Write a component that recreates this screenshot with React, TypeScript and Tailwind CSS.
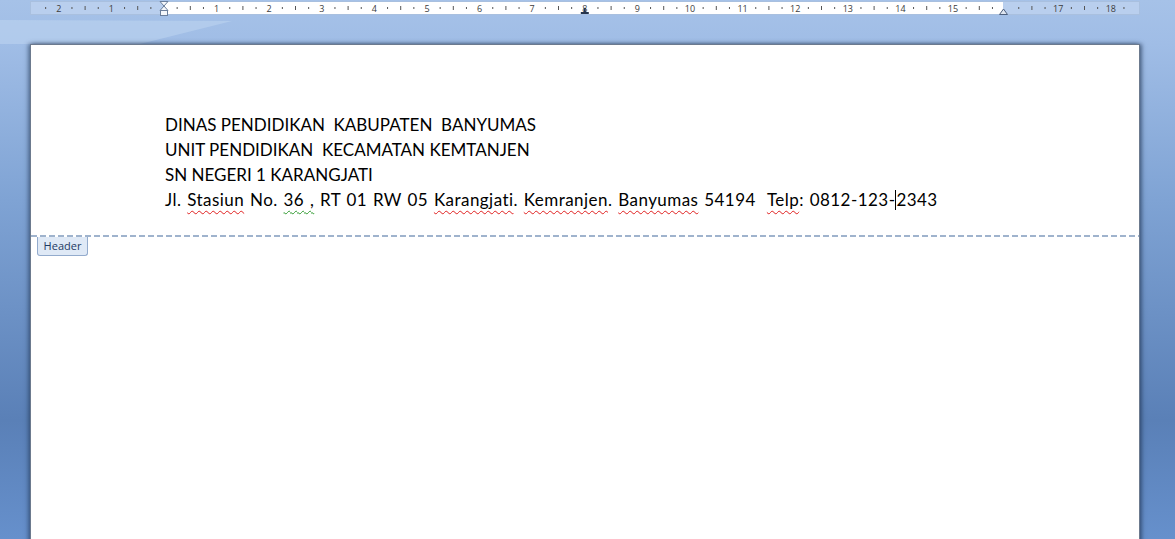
import React from "react";

// ruler geometry: 1 cm = 52.6px, zero point at 134px from the ruler's left edge
const CM = 52.6;
const ZERO = 134;

function Ruler() {
  const ticks: React.ReactNode[] = [];
  for (let q = -10; q <= 76; q++) {
    const x = ZERO + (q * CM) / 4;
    if (x < 3 || x > 1107) continue;
    const n = q / 4;
    if (q % 4 === 0) {
      // 0 and 16 sit under the indent markers
      if (n === 0 || n === 16) continue;
      ticks.push(
        <text key={q} x={x} y={10.5} textAnchor="middle" fontSize="9" fill="#3c3c3c" fontFamily="'Open Sans', sans-serif">
          {Math.abs(n)}
        </text>
      );
    } else if (q % 2 === 0) {
      ticks.push(<rect key={q} x={x - 0.5} y={5} width={1} height={4} fill="#555" />);
    } else {
      ticks.push(<rect key={q} x={x - 0.5} y={6} width={1} height={2} fill="#555" />);
    }
  }
  return (
    <svg width="1110" height="16" viewBox="0 0 1110 16" className="block">
      <rect x="0.5" y="0.5" width="1109" height="13" fill="#b9cfee" stroke="#a9c0df" />
      <rect x={ZERO} y="1" width={973 - ZERO} height="12" fill="#ffffff" />
      {ticks}
      {/* first line / hanging indent */}
      <path d="M130 0.5 L138 0.5 L134 5 Z" fill="#f4f7fb" stroke="#6b7f9c" />
      <path d="M134 5 L130 9.5 L138 9.5 Z" fill="#f4f7fb" stroke="#6b7f9c" />
      <rect x="130.5" y="9.5" width="7" height="5" fill="#f4f7fb" stroke="#6b7f9c" />
      {/* tab stop */}
      <rect x={ZERO + 8 * CM - 4} y="11" width="8" height="2" fill="#26354d" />
      <rect x={ZERO + 8 * CM - 1} y="7" width="2" height="5" fill="#26354d" />
      {/* right indent */}
      <path d="M969.5 13.5 L977.5 13.5 L973.5 8 Z" fill="#dfe6f0" stroke="#4d5f7c" />
    </svg>
  );
}

const red = "underline decoration-wavy decoration-[#e02020] decoration-1 underline-offset-[4px] [text-decoration-skip-ink:none]";
const green = "underline decoration-wavy decoration-[#2f9a2f] decoration-1 underline-offset-[4px] [text-decoration-skip-ink:none]";

export default function App() {
  return (
    <div className="relative h-[539px] w-full overflow-hidden bg-[linear-gradient(180deg,#a6c2e8_0px,#a0bde6_44px,#7fa3d4_200px,#5a80b7_420px,#6690cc_539px)]">
      {/* light sheen in the upper left corner */}
      <svg className="absolute left-0 top-[18px]" width="240" height="30" viewBox="0 0 240 30">
        <path d="M0 2 L232 3 L140 26 L0 26 Z" fill="#c0d5f0" opacity="0.55" />
      </svg>

      <div className="relative pt-[1px] pl-[30px]">
        <Ruler />
      </div>

      <div className="relative ml-[30px] mt-[27px] h-[520px] w-[1110px] border border-[#6c7a8e] bg-white shadow-[2px_0_4px_rgba(30,50,80,0.6),-2px_0_4px_rgba(30,50,80,0.5)]">
        <div className="pl-[134px] pt-[67px] font-['Lato','Noto_Sans',sans-serif] text-[17px] leading-[25px] text-black whitespace-pre">
          <div>DINAS PENDIDIKAN  KABUPATEN  BANYUMAS</div>
          <div>UNIT PENDIDIKAN  KECAMATAN KEMTANJEN</div>
          <div>SN NEGERI 1 KARANGJATI</div>
          <div className="tracking-[0.45px] [word-spacing:1px]">
            Jl. <span className={red}>Stasiun</span> No. <span className={green}>36 ,</span> RT 01 RW 05{" "}
            <span className={red}>Karangjati</span>. <span className={red}>Kemranjen</span>.{" "}
            <span className={red}>Banyumas</span> 54194  <span className={red}>Telp</span>: 0812-123-
            <span className="relative inline-block h-[20px] w-0 border-l border-black align-[-4px]" />
            2343
          </div>
        </div>

        <div className="mt-[23px] h-[2px] w-full bg-[repeating-linear-gradient(90deg,#9fb3cd_0_6px,transparent_6px_9px)]" />
        <div className="ml-[6px] flex h-[19px] w-[51px] items-center justify-center rounded-b-[3px] border border-t-0 border-[#93abcd] bg-[#dfe9f6] font-['Open_Sans',sans-serif] text-[11px] text-[#1d3a63]">
          Header
        </div>
      </div>
    </div>
  );
}
